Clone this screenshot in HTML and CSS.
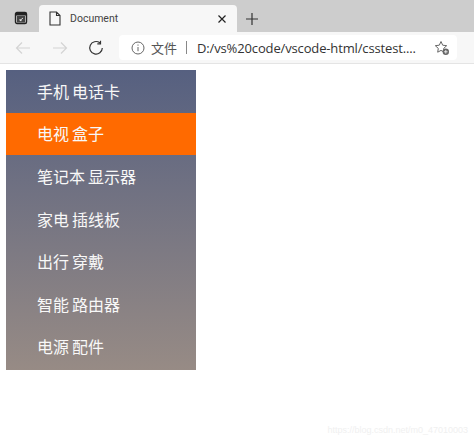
FILE: index.html
```html
<!DOCTYPE html>
<html lang="zh">
<head>
<meta charset="utf-8">
<title>Document</title>
<link rel="stylesheet" href="styles.css">
</head>
<body>
<div class="tabstrip">
  <div class="workspace">
    <svg width="14" height="14" viewBox="0 0 14 14"><rect x="1.500" y="1.500" width="11" height="11" rx="1.500" fill="none" stroke="#222" stroke-width="1.400"/><rect x="2" y="2" width="10" height="2.500" fill="#222"/><rect x="3" y="5" width="8" height="6.500" fill="#444"/><path d="M9 7 6 9.500M6 8v1.600h1.600" fill="none" stroke="#eee" stroke-width=".9"/></svg>
  </div>
  <div class="tab">
    <svg class="doc" width="12" height="15" viewBox="0 0 12 15"><path d="M1 1h6.500L11 4.500V14H1zM7.500 1v3.500H11" fill="none" stroke="#333" stroke-width="1.100"/></svg>
    <span class="tab-title">Document</span>
    <svg class="close" width="10" height="10" viewBox="0 0 10 10"><path d="M1.500 1.500l7 7M8.500 1.500l-7 7" stroke="#222" stroke-width="1.200"/></svg>
  </div>
  <svg class="plus" width="14" height="14" viewBox="0 0 14 14"><path d="M7 1v12M1 7h12" stroke="#333" stroke-width="1.200"/></svg>
</div>
<div class="toolbar">
  <svg class="nav" width="16" height="14" viewBox="0 0 16 14"><path d="M15 7H1.500M7 1.500 1.500 7 7 12.500" fill="none" stroke="#d4d4d4" stroke-width="1.200"/></svg>
  <svg class="nav" width="16" height="14" viewBox="0 0 16 14"><path d="M1 7h13.500M9 1.500 14.500 7 9 12.500" fill="none" stroke="#d4d4d4" stroke-width="1.200"/></svg>
  <svg class="nav" width="16" height="16" viewBox="0 0 16 16"><path d="M11.800 2.800A6.300 6.300 0 1 0 14.300 8M12.500 .8v3H9.300" fill="none" stroke="#333" stroke-width="1.200"/></svg>
  <div class="address">
    <svg width="14" height="14" viewBox="0 0 14 14"><circle cx="7" cy="7" r="6" fill="none" stroke="#666" stroke-width="1"/><path d="M7 6v4.200M7 3.500v1.200" stroke="#666" stroke-width="1"/></svg>
    <span class="scheme">文件</span>
    <span class="sep"></span>
    <span class="url">D:/vs%20code/vscode-html/csstest....</span>
    <svg class="star" width="16" height="16" viewBox="0 0 16 16"><path d="M7 1.500 8.700 5.200l4 .5-3 2.700.6 3.800L7 10.400l-3.300 1.800.6-3.800-3-2.700 4-.5z" fill="none" stroke="#666" stroke-width="1"/><circle cx="11.800" cy="11.800" r="3.200" fill="#666"/><path d="M11.800 10v3.600M10 11.800h3.600" stroke="#fff" stroke-width=".8"/></svg>
  </div>
</div>
<ul class="menu">
  <li>手机 电话卡</li>
  <li class="active">电视 盒子</li>
  <li>笔记本 显示器</li>
  <li>家电 插线板</li>
  <li>出行 穿戴</li>
  <li>智能 路由器</li>
  <li>电源 配件</li>
</ul>
<div class="watermark">https://blog.csdn.net/m0_47010003</div>
</body>
</html>
```
FILE: styles.css
```css
* { box-sizing: border-box; }
html, body { margin: 0; padding: 0; }
body {
  width: 474px;
  height: 440px;
  background: #fff;
  overflow: hidden;
  position: relative;
  font-family: "Liberation Sans", "Noto Sans CJK SC", sans-serif;
}
.tabstrip {
  height: 32px;
  padding-top: 5px;
  background: #cdcdcd;
  display: flex;
  align-items: stretch;
}
.workspace {
  width: 39px;
  display: flex;
  align-items: center;
  justify-content: center;
  padding: 0 0 1px 2px;
}
.tab {
  width: 198px;
  background: #f7f7f7;
  border-radius: 4px 4px 0 0;
  display: flex;
  align-items: center;
  padding: 0 10px;
}
.tab-title {
  margin-left: 9px;
  flex: 1;
  font: 10.500px "Roboto", "Liberation Sans", sans-serif;
  color: #444;
}
.plus { align-self: center; margin-left: 8px; }
.toolbar {
  height: 32px;
  background: #f7f7f7;
  border-bottom: 1px solid #e4e4e4;
  display: flex;
  align-items: center;
  padding: 0 17px 0 15px;
}
.nav { margin-right: 21px; flex: none; }
.nav:nth-child(2) { margin-right: 20px; }
.nav:nth-child(3) { margin-right: 15px; }
.address {
  flex: 1;
  height: 25px;
  background: #fff;
  border-radius: 4px;
  display: flex;
  align-items: center;
  padding: 0 7px 0 12px;
  color: #333;
  font-size: 13px;
}
.scheme { margin-left: 6px; color: #555; }
.sep { width: 1px; height: 13px; background: #888; margin: 0 10px 0 9px; }
.url { flex: 1; white-space: nowrap; font-family: "Open Sans", "Liberation Sans", sans-serif; font-size: 13px; letter-spacing: -.14px; }
.menu {
  list-style: none;
  width: 190px;
  height: 300px;
  margin: 6px 0 0 6px;
  padding: 0;
  background: linear-gradient(#566080, #978b85);
  display: flex;
  flex-direction: column;
}
.menu li {
  flex: none;
  height: 42.600px;
  display: flex;
  align-items: center;
  padding: 0 0 1px 31px;
  color: #f8f8f8;
  font-size: 16px;
  word-spacing: -1.500px;
  white-space: pre;
}
.menu li.active { background: #ff6a00; }
.watermark {
  position: absolute;
  right: 6px;
  bottom: 5px;
  font-size: 9px;
  color: #f0f0f0;
}
```
